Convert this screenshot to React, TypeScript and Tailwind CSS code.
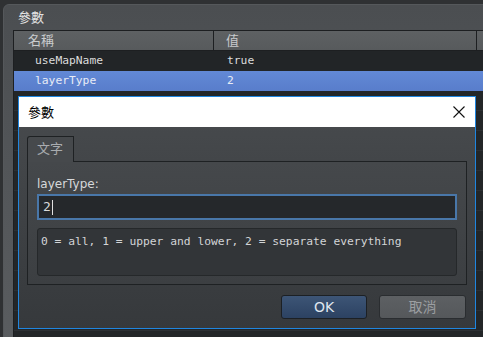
import { useState } from 'react';

const rows = [
  { name: 'useMapName', value: 'true' },
  { name: 'layerType', value: '2' },
];

export default function App() {
  const [selected] = useState(1);

  return (
    <div className="relative w-[483px] h-[337px] overflow-hidden bg-[#2f3133] font-['DejaVu_Sans','Noto_Sans_CJK_TC',sans-serif]">
      {/* 背景のパラメータ一覧 */}
      <div className="pt-[4px] pl-[3px]">
        <div className="w-[500px] h-[340px] rounded-tl-[6px] border border-[#55585b] bg-gradient-to-b from-[#4b4e51] to-[#5a5d60] pl-[9px]">
          <div className="h-[25px] pl-[5px] pt-[5px] text-[13px] leading-[16px] text-[#e2e2e2]">參數</div>
          <div className="border-t border-l border-[#1d1f21] bg-[#232628] h-[320px]">
            <div className="flex h-[20px] bg-gradient-to-b from-[#5e6163] to-[#575a5c] border-b border-[#1d1f21] text-[13px] leading-[19px] text-[#c9cbcd]">
              <div className="w-[200px] pl-[14px] border-r border-[#1d1f21]">名稱</div>
              <div className="w-[263px] pl-[12px] border-r border-[#1d1f21]">值</div>
              <div className="flex-1" />
            </div>
            {rows.map((r, i) => (
              <div
                key={r.name}
                className={
                  i === selected
                    ? 'flex h-[20px] bg-gradient-to-b from-[#6289d6] to-[#587dcb] text-[#e8ecf6] font-["DejaVu_Sans_Mono",monospace] text-[11.3px] leading-[20px]'
                    : 'flex h-[20px] bg-[#222527] text-[#dcdcdc] font-["DejaVu_Sans_Mono",monospace] text-[11.3px] leading-[20px]'
                }
              >
                <div className="w-[200px] pl-[21px]">{r.name}</div>
                <div className="pl-[13px]">{r.value}</div>
              </div>
            ))}
            {Array.from({ length: 12 }).map((_, i) => (
              <div key={i} className="h-[20px] border-b border-[#2d3033]" />
            ))}
          </div>
        </div>
      </div>

      {/* ダイアログ */}
      <div className="absolute left-[18px] top-[96px] w-[458px] h-[233px] border border-[#1f86e0] flex flex-col bg-gradient-to-b from-[#484b4e] to-[#36393c]">
        <div className="h-[30px] bg-white flex items-center justify-between pl-[9px] pr-[8px]">
          <span className="text-[13px] text-black leading-none">參數</span>
          <svg width="14" height="14" viewBox="0 0 14 14" className="mr-[1px]">
            <path d="M1.5 1.5 L12.5 12.5 M12.5 1.5 L1.5 12.5" stroke="#111" strokeWidth="1.1" />
          </svg>
        </div>

        <div className="flex-1 flex flex-col px-[8px] pt-[9px]">
          {/* タブ */}
          <div className="flex">
            <div className="relative z-10 w-[47px] h-[26px] -mb-px rounded-tl-[3px] border border-b-0 border-[#1e2123] bg-[#46494c] pl-[9px] pt-[4px] text-[13px] leading-[16px] text-[#a9acaf]">
              文字
            </div>
          </div>
          <div className="h-[124px] border border-[#1e2123] bg-gradient-to-b from-[#45484b] to-[#3c3f42] px-[9px] pt-[14px]">
            <div className="text-[12px] leading-[16px] text-[#d6d8da]">layerType:</div>
            <div className="mt-[2px] h-[26px] border-2 border-[#4977a9] bg-[#25282b] flex items-center pl-[4px] font-['DejaVu_Sans_Mono',monospace] text-[13px] text-[#dadada]">
              2<span className="ml-[1px] inline-block w-px h-[15px] bg-[#e0e0e0]" />
            </div>
            <div className="mt-[8px] h-[48px] rounded-[3px] border border-[#25282a] bg-[#323538] pl-[3px] pt-[5px] font-['DejaVu_Sans_Mono',monospace] text-[11.3px] leading-[16px] text-[#d2d4d6]">
              0 = all, 1 = upper and lower, 2 = separate everything
            </div>
          </div>

          {/* ボタン */}
          <div className="flex justify-end gap-[12px] mt-[10px] pr-[1px]">
            <button className="w-[86px] h-[24px] rounded-[3px] border border-[#1c2024] bg-gradient-to-b from-[#3d5576] to-[#2c4262] text-[14px] text-[#dfe5ee]">
              OK
            </button>
            <button className="w-[87px] h-[24px] rounded-[3px] border border-[#2a2d30] bg-gradient-to-b from-[#5d6063] to-[#55585b] text-[14px] text-[#9b9ea1]">
              取消
            </button>
          </div>
        </div>
      </div>
    </div>
  );
}
